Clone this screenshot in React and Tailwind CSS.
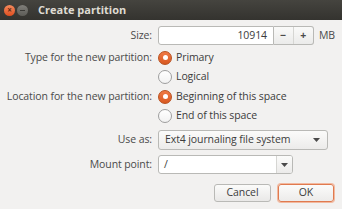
import React from "react";

function Radio({ checked }) {
  return checked ? (
    <span className="w-[14px] h-[14px] rounded-full border border-[#b8501f] bg-gradient-to-b from-[#f07a45] to-[#d9581f] flex items-center justify-center shrink-0">
      <span className="w-[5px] h-[5px] rounded-full bg-white" />
    </span>
  ) : (
    <span className="w-[14px] h-[14px] rounded-full border border-[#9e9e9e] bg-gradient-to-b from-white to-[#f2f2f2] shrink-0" />
  );
}

function Arrow() {
  return (
    <svg width="7" height="4" viewBox="0 0 7 4">
      <path d="M0 0 L7 0 L3.5 4 Z" fill="#4a4a4a" />
    </svg>
  );
}

function Row({ label, h, mt, children }) {
  return (
    <div className={`flex items-center ${h} ${mt}`}>
      <div className="w-[152px] flex justify-end whitespace-nowrap text-[#4a4a4a] shrink-0">{label}</div>
      <div className="ml-[6px] flex items-center flex-1 whitespace-nowrap">{children}</div>
    </div>
  );
}

export default function App() {
  return (
    <div
      className="w-[342px] h-[209px] bg-[#f2f1f0] text-[10.5px] tracking-[-0.1px] text-[#3c3c3c] overflow-hidden"
      style={{ fontFamily: '"Open Sans", "DejaVu Sans", sans-serif' }}
    >
      <div className="h-[20px] bg-gradient-to-b from-[#45443f] to-[#34332f] flex items-center">
        <span className="ml-[4px] w-[11px] h-[11px] rounded-full bg-gradient-to-b from-[#f58a5c] to-[#df4d1c] flex items-center justify-center text-[8px] leading-none text-[#5a2a14] font-bold">×</span>
        <span className="ml-[2px] w-[11px] h-[11px] rounded-full bg-gradient-to-b from-[#807f7a] to-[#5d5c57] flex items-center justify-center">
          <span className="w-[5px] h-[1px] bg-[#3a3935]" />
        </span>
        <span className="ml-[10px] text-[#dfdbd2] font-bold text-[11px] tracking-normal">Create partition</span>
      </div>

      <Row label="Size:" h="h-[19px]" mt="mt-[6px]">
        <div className="flex items-center h-[19px]">
          <div className="w-[116px] h-[19px] border border-[#b9b9b6] rounded-l-[3px] bg-white flex items-center justify-end pr-[6px] text-[#3c3c3c]">
            10914
          </div>
          <div className="h-[19px] w-[40px] border border-l-0 border-[#b9b9b6] rounded-r-[3px] bg-gradient-to-b from-[#fafaf9] to-[#ebebea] flex">
            <div className="w-[20px] h-full flex items-center justify-center border-r border-[#d6d6d3] font-bold text-[#4a4a4a]">−</div>
            <div className="w-[20px] h-full flex items-center justify-center font-bold text-[#4a4a4a]">+</div>
          </div>
          <span className="ml-[5px] text-[#4a4a4a]">MB</span>
        </div>
      </Row>

      <Row label="Type for the new partition:" h="h-[19px]" mt="mt-[3px]">
        <Radio checked />
        <span className="ml-[4px]">Primary</span>
      </Row>
      <Row label="" h="h-[19px]" mt="mt-0">
        <Radio />
        <span className="ml-[4px]">Logical</span>
      </Row>
      <Row label="Location for the new partition:" h="h-[19px]" mt="mt-[1px]">
        <Radio checked />
        <span className="ml-[4px]">Beginning of this space</span>
      </Row>
      <Row label="" h="h-[19px]" mt="mt-0">
        <Radio />
        <span className="ml-[4px]">End of this space</span>
      </Row>

      <Row label="Use as:" h="h-[20px]" mt="mt-[5px]">
        <div className="w-[170px] h-[20px] border border-[#b9b9b6] rounded-[3px] bg-gradient-to-b from-[#fbfbfa] to-[#ecebea] flex items-center justify-between pl-[6px] pr-[7px]">
          <span>Ext4 journaling file system</span>
          <Arrow />
        </div>
      </Row>

      <Row label="Mount point:" h="h-[19px]" mt="mt-[5px]">
        <div className="w-[135px] h-[19px] border border-[#b9b9b6] rounded-[3px] bg-white flex overflow-hidden">
          <div className="flex-1 flex items-center pl-[5px]">/</div>
          <div className="w-[16px] h-full border-l border-[#d6d6d3] bg-gradient-to-b from-[#fbfbfa] to-[#ecebea] flex items-center justify-center">
            <Arrow />
          </div>
        </div>
      </Row>

      <div className="flex justify-end mt-[10px] pr-[8px] gap-[7px]">
        <div className="w-[57px] h-[18px] border border-[#b9b9b6] rounded-[3px] bg-gradient-to-b from-[#fbfbfa] to-[#e9e8e7] flex items-center justify-center">Cancel</div>
        <div className="w-[56px] h-[18px] border border-[#e07a4f] rounded-[3px] bg-gradient-to-b from-[#fbfbfa] to-[#ecebea] flex items-center justify-center shadow-[0_0_0_1px_#f2b99f]">OK</div>
      </div>
    </div>
  );
}
